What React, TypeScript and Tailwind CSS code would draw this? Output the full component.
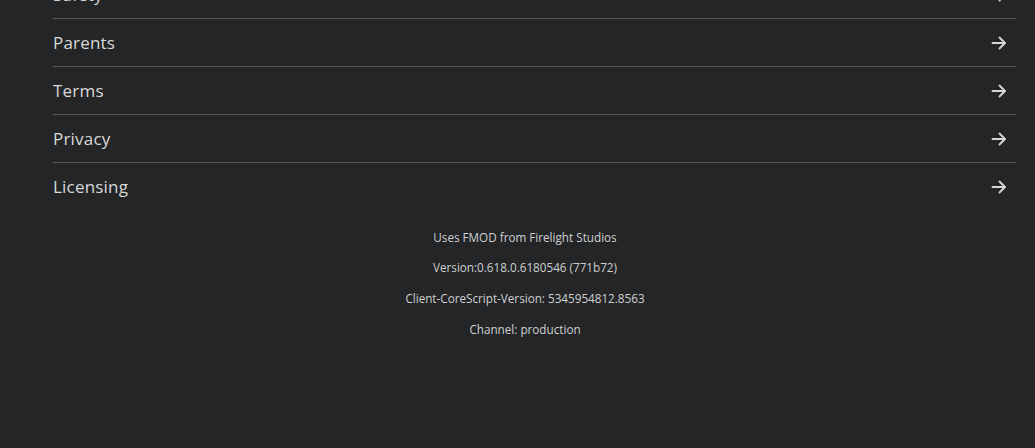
import React from "react";

const Arrow = () => (
  <svg width="16" height="16" viewBox="0 0 16 16" fill="none" stroke="#d6d6d6" strokeWidth="1.8" strokeLinecap="round" strokeLinejoin="round">
    <path d="M1.5 8h12.5" />
    <path d="M8.5 2.5L14 8l-5.5 5.5" />
  </svg>
);

const rows = ["Safety", "Parents", "Terms", "Privacy", "Licensing"];

export default function App() {
  return (
    <div className="w-full h-[448px] overflow-hidden bg-[#232527]" style={{ fontFamily: '"Open Sans", "Liberation Sans", sans-serif' }}>
      <div className="mt-[-29px] ml-[53px] mr-[19px]">
        {rows.map((r, i) => (
          <div
            key={r}
            className={`h-[48px] flex items-center justify-between pr-[9px] ${i < rows.length - 1 ? "border-b border-[#57595c]" : ""}`}
          >
            <span className="text-[17px] text-[#d9d9d9] tracking-[0.2px]">{r}</span>
            <Arrow />
          </div>
        ))}
      </div>
      <div className="ml-[53px] mr-[38px] mt-[11px] flex flex-col items-center text-[11.7px] text-[#d0d0d0]">
        <div className="h-[30.67px] flex items-center">Uses FMOD from Firelight Studios</div>
        <div className="h-[30.67px] flex items-center">Version:0.618.0.6180546 (771b72)</div>
        <div className="h-[30.67px] flex items-center">Client-CoreScript-Version: 5345954812.8563</div>
        <div className="h-[30.67px] flex items-center">Channel: production</div>
      </div>
    </div>
  );
}
